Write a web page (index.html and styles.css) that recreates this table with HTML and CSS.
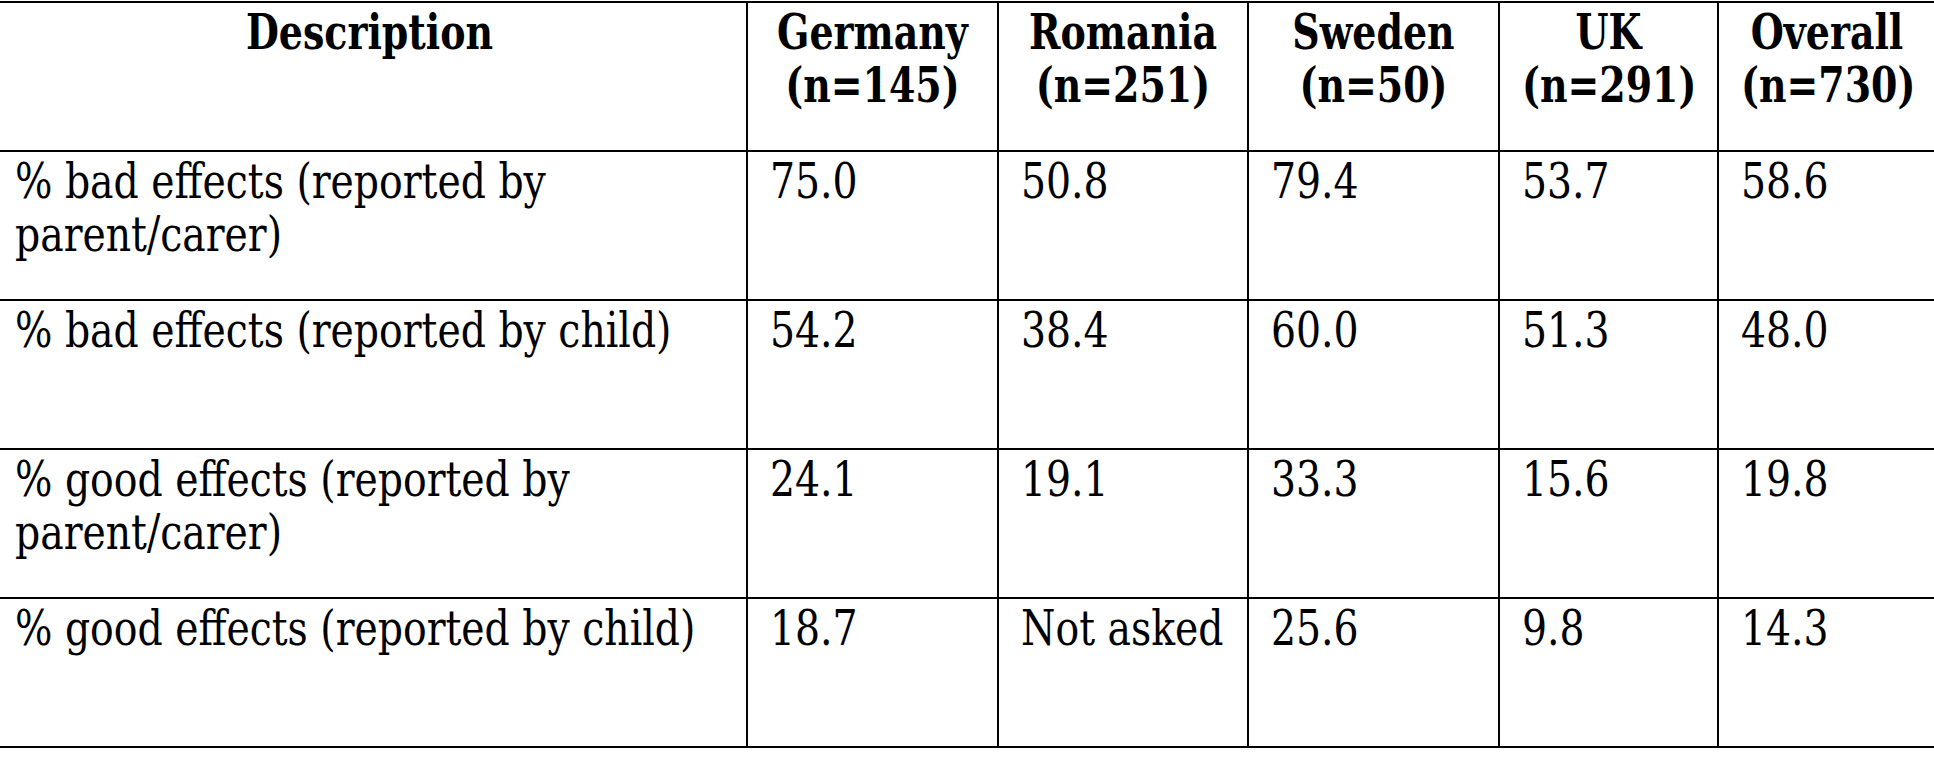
FILE: index.html
```html
<!DOCTYPE html>
<html lang="en">
<head>
<meta charset="utf-8">
<title>Effects table</title>
<link rel="stylesheet" href="styles.css">
</head>
<body>
<table class="data">
  <colgroup>
    <col class="c-desc">
    <col class="c-wide">
    <col class="c-mid">
    <col class="c-wide">
    <col class="c-narrow">
    <col class="c-last">
  </colgroup>
  <thead>
    <tr>
      <th class="first"><div class="fit">Description</div></th>
      <th><div class="fit">Germany<br>(n=145)</div></th>
      <th><div class="fit">Romania<br>(n=251)</div></th>
      <th><div class="fit">Sweden<br>(n=50)</div></th>
      <th><div class="fit">UK<br>(n=291)</div></th>
      <th><div class="fit">Overall<br>(n=730)</div></th>
    </tr>
  </thead>
  <tbody>
    <tr>
      <td class="first"><div class="fit">% bad effects (reported by parent/carer)</div></td>
      <td><div class="fit">75.0</div></td>
      <td><div class="fit">50.8</div></td>
      <td><div class="fit">79.4</div></td>
      <td><div class="fit">53.7</div></td>
      <td><div class="fit">58.6</div></td>
    </tr>
    <tr>
      <td class="first"><div class="fit">% bad effects (reported by child)</div></td>
      <td><div class="fit">54.2</div></td>
      <td><div class="fit">38.4</div></td>
      <td><div class="fit">60.0</div></td>
      <td><div class="fit">51.3</div></td>
      <td><div class="fit">48.0</div></td>
    </tr>
    <tr>
      <td class="first"><div class="fit">% good effects (reported by parent/carer)</div></td>
      <td><div class="fit">24.1</div></td>
      <td><div class="fit">19.1</div></td>
      <td><div class="fit">33.3</div></td>
      <td><div class="fit">15.6</div></td>
      <td><div class="fit">19.8</div></td>
    </tr>
    <tr>
      <td class="first"><div class="fit">% good effects (reported by child)</div></td>
      <td><div class="fit">18.7</div></td>
      <td><div class="fit">Not asked</div></td>
      <td><div class="fit">25.6</div></td>
      <td><div class="fit">9.8</div></td>
      <td><div class="fit">14.3</div></td>
    </tr>
  </tbody>
</table>
</body>
</html>
```

FILE: styles.css
```css
html, body {
  margin: 0;
  padding: 0;
  background: #ffffff;
  overflow: hidden;
}

.data {
  border-collapse: collapse;
  table-layout: fixed;
  width: 1946px;
  margin: 1px 0 0 -11px;
  font-family: "DejaVu Serif", "Liberation Serif", serif;
  font-size: 48px;
  line-height: 53.3px;
  color: #000000;
}

.c-desc { width: 757px; }
.c-wide { width: 251px; }
.c-mid { width: 250px; }
.c-narrow { width: 219px; }
.c-last { width: 218px; }

.data tr {
  height: 149px;
}

.data th,
.data td {
  border: 2px solid #000000;
  vertical-align: top;
  padding: 3px 22px 0 22px;
  overflow: hidden;
}

.data th {
  font-weight: bold;
  text-align: center;
}

.data td {
  font-weight: normal;
  text-align: left;
}

.data .first {
  padding-left: 24px;
}

.fit {
  width: 122%;
  transform: scaleX(0.82);
  transform-origin: 0 0;
}

.data th .fit {
  width: 126.6%;
  transform: scaleX(0.79);
}
```
